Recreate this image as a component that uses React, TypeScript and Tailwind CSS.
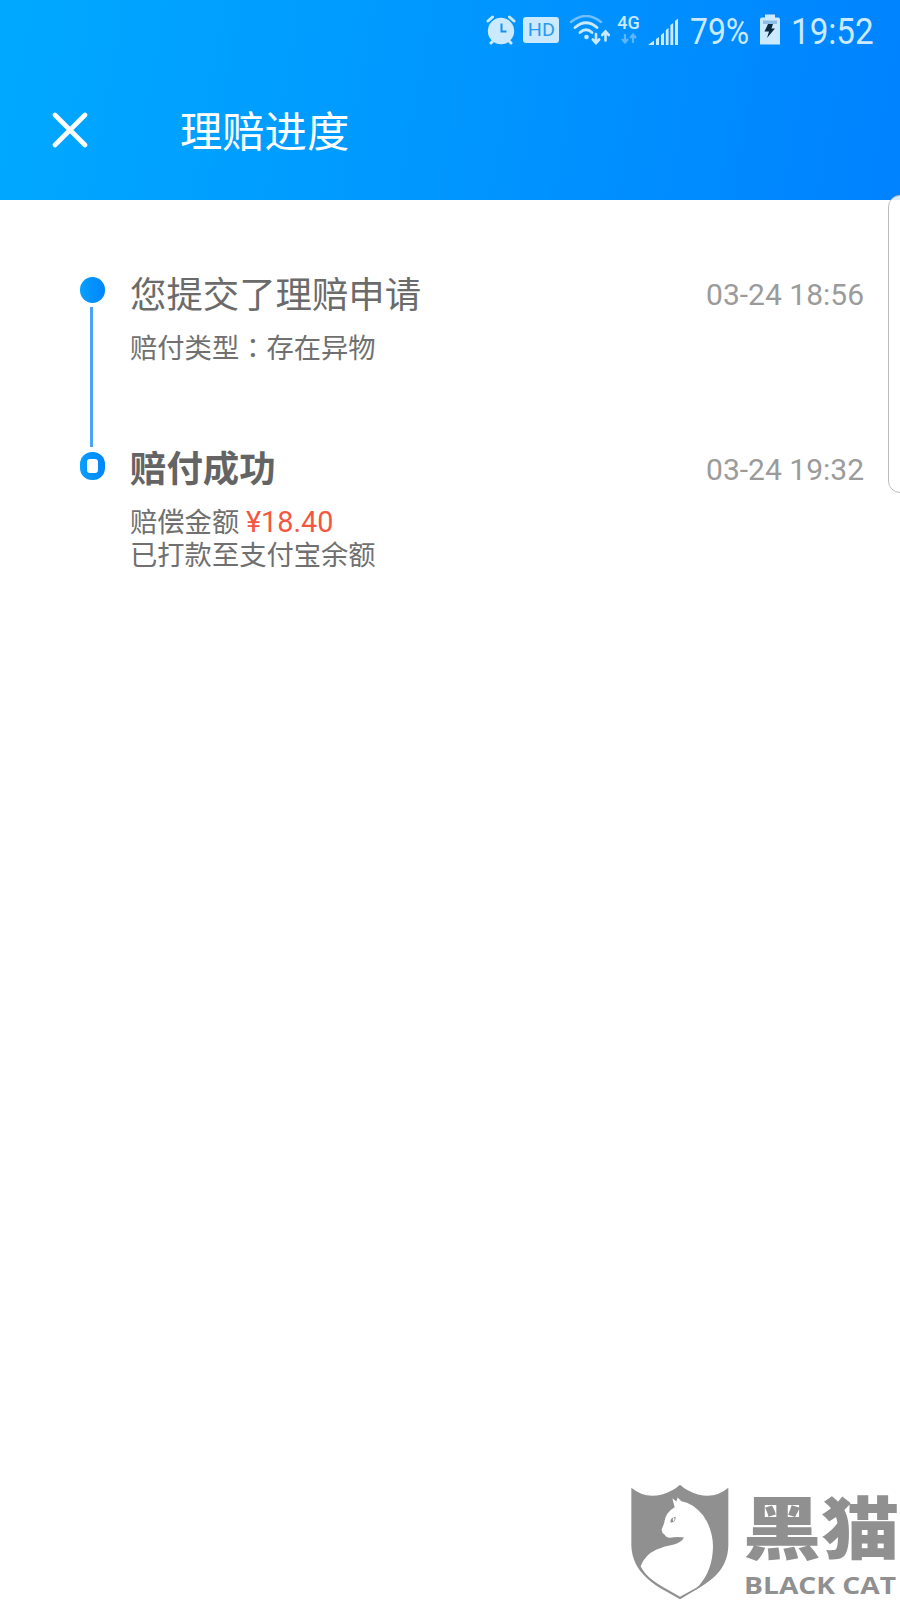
import type { ReactNode } from "react";

function AlarmIcon() {
  return (
    <svg width="30" height="31" viewBox="0 0 30 31" fill="none">
      <circle cx="15" cy="16" r="13.2" fill="#cbe9ff" />
      <path d="M2 6 L6.5 2 M28 6 L23.5 2" stroke="#cbe9ff" strokeWidth="3" strokeLinecap="round" />
      <path d="M5 28 L8 25 M25 28 L22 25" stroke="#cbe9ff" strokeWidth="3" strokeLinecap="round" />
      <path d="M15.5 8.5 V16.5 H20.5" stroke="#1593f5" strokeWidth="2" />
    </svg>
  );
}

function WifiIcon() {
  return (
    <svg width="42" height="31" viewBox="0 0 42 31" fill="none" strokeLinecap="round">
      <path d="M2 7 Q17 -5 32 7" stroke="#6fc0ff" strokeWidth="2.4" />
      <path d="M6 12.5 Q17 3 28 12.5" stroke="#cbe9ff" strokeWidth="2.8" />
      <path d="M11 17.5 Q17 12 23 17.5" stroke="#cbe9ff" strokeWidth="2.8" />
      <circle cx="17.5" cy="22" r="2.3" fill="#cbe9ff" />
      <path d="M27 19 V27 M23.8 24.5 L27 28 L30.2 24.5" stroke="#cbe9ff" strokeWidth="2.6" />
      <path d="M36.5 25.5 V17.5 M33.2 20 L36.5 16.5 L39.8 20" stroke="#cbe9ff" strokeWidth="2.6" />
    </svg>
  );
}

function SignalIcon() {
  return (
    <svg width="31" height="28" viewBox="0 0 31 28" fill="#cbe9ff">
      <path d="M0 27 L6 22.5 V27 Z" />
      <path d="M8 21 L11 19 V27 H8 Z" />
      <path d="M13 17 L16 14.5 V27 H13 Z" />
      <path d="M17.8 12 L20.6 10 V27 H17.8 Z" />
      <path d="M22.4 7 L25.2 5 V27 H22.4 Z" />
      <path d="M27 3 L30 0.5 V27 H27 Z" />
    </svg>
  );
}

function BatteryIcon() {
  return (
    <svg width="20" height="31" viewBox="0 0 20 31">
      <path d="M5 0.5 H15 V3.5 H18 Q20 3.5 20 5.5 V30.5 H0 V5.5 Q0 3.5 2 3.5 H5 Z" fill="#cbe9ff" />
      <rect x="3" y="6.5" width="14" height="3.5" fill="#8bbfe8" />
      <path d="M8 10 H13 L11.5 14.5 H15 L7 24 L9 17.5 H4.5 Z" fill="#0b2a42" />
    </svg>
  );
}

function StatusBar() {
  return (
    <div className="flex h-[60px] items-center pl-[486px] text-[#cbe9ff]">
      <AlarmIcon />
      <div className="mb-px ml-[7px] flex h-[26px] w-9 items-center justify-center rounded-[3px] bg-[#cbe9ff] text-[18px] leading-none text-[#2b9bf0]">
        <span className="scale-x-110">HD</span>
      </div>
      <div className="ml-[10px]">
        <WifiIcon />
      </div>
      <div className="ml-[5px] flex h-[34px] w-[25px] flex-col items-center">
        <span className="text-[18px] font-medium leading-[20px]">4G</span>
        <svg width="16" height="11" viewBox="0 0 16 11" fill="none" stroke="#5db5fb" strokeWidth="2.2">
          <path d="M4 1 V9 M1 6 L4 9.5 L7 6" />
          <path d="M12 10 V2 M9 5 L12 1.5 L15 5" />
        </svg>
      </div>
      <div className="ml-[7px] mt-[3px]">
        <SignalIcon />
      </div>
      <div className="ml-[11px] w-[61px] text-[37.5px] leading-[60px]">
        <div className="mt-px origin-left scale-x-[0.85] whitespace-nowrap">79%</div>
      </div>
      <div className="-mt-px ml-[9px]">
        <BatteryIcon />
      </div>
      <div className="ml-[11px] w-[84px] text-[37.5px] leading-[60px]">
        <div className="mt-px origin-left scale-x-[0.885] whitespace-nowrap">19:52</div>
      </div>
    </div>
  );
}

function Header() {
  return (
    <header className="h-[200px] bg-[linear-gradient(100deg,#00a9ff_0%,#0097ff_50%,#0082ff_100%)]">
      <StatusBar />
      <div className="flex h-[140px] items-center pl-[52px]">
        <svg width="36" height="36" viewBox="0 0 36 36" stroke="white" strokeWidth="4.6" strokeLinecap="round">
          <path d="M3 3 L33 33 M33 3 L3 33" />
        </svg>
        <h1 className="ml-[92px] mt-[6px] text-[42.3px] leading-[60px] text-white">理赔进度</h1>
      </div>
    </header>
  );
}

type StepProps = {
  title: string;
  time: string;
  current?: boolean;
  children: ReactNode;
};

function Step({ title, time, current, children }: StepProps) {
  return (
    <li className="flex h-[175px]">
      <div className="flex w-[25px] flex-col items-center">
        {current ? (
          <div className="flex h-7 w-[25px] shrink-0 items-center justify-center rounded-[12px] bg-linear-to-r from-[#0a9fff] to-[#0085ff]">
            <div className="h-[14px] w-[11px] rounded-[3px] bg-white" />
          </div>
        ) : (
          <>
            <div className="h-[26px] w-[25px] shrink-0 rounded-full bg-linear-to-r from-[#0a9fff] to-[#0085ff]" />
            <div className="mr-[2px] mt-1 h-[140px] w-[3px] bg-[#4aa3f3]" />
          </>
        )}
      </div>
      <div className="ml-[25px] flex-1">
        <div className="flex h-9 items-center justify-between">
          <h2 className={current ? "mt-px text-[36.4px] font-bold text-[#646464]" : "mt-[2px] text-[36.4px] text-[#6b6b6b]"}>
            {title}
          </h2>
          <time className="mb-px text-[30px] text-[#9b9b9b]">{time}</time>
        </div>
        <div className={current ? "mt-[19px] text-[27.3px] leading-[33px] text-[#707070]" : "mt-[17px] text-[27.3px] leading-[33px] text-[#707070]"}>
          {children}
        </div>
      </div>
    </li>
  );
}

// Shield with the sitting cat, plus the brand name
function BlackCatMark() {
  return (
    <div className="absolute bottom-0 right-0 flex h-[120px] w-[270px] text-[#919091]">
      <svg width="100" height="117" viewBox="30 40 300 350" className="mt-[3px] shrink-0">
        <path
          d="M34 54 Q75 88 126 74 Q160 64 180 45 Q200 64 234 74 Q285 88 325 54 V226 Q324 286 278 325 Q258 342 218 366 L180 388 L143 367 Q105 348 82 326 Q36 286 34 228 Z"
          fill="currentColor"
        />
        <path
          d="M157 85 L169 95 L173 83 L184 94 Q218 99 249 136 Q278 177 279 230 Q278 300 238 346 Q228 356 214 362 L180 381 L146 361 Q112 344 89 324 Q70 306 62 289 Q74 255 110 239 Q135 229 159 225 Q185 218 192 203 Q169 200 150 204 Q139 204 134 195 Q124 189 125 178 Q130 168 133 157 Q137 127 164 112 Z"
          fill="white"
        />
        <path d="M151 154 Q154 142 167 141 Q168 157 153 159 Z" fill="currentColor" />
        <ellipse cx="161" cy="148" rx="2.5" ry="6" fill="white" />
      </svg>
      <div className="ml-[13px] w-[157px] pt-[17px]">
        <div className="h-[70px] origin-top-left scale-x-[0.99] scale-y-[0.87] whitespace-nowrap text-[79px] font-black leading-[79px]">
          黑猫
        </div>
        <div className="ml-px mt-[4px] origin-left scale-x-[1.2] whitespace-nowrap font-['Open_Sans'] text-[23.5px] font-bold leading-[28px]">
          BLACK CAT
        </div>
      </div>
    </div>
  );
}

export default function App() {
  return (
    <div className="relative h-[1600px] w-[900px] overflow-hidden bg-white font-[Roboto,'Noto_Sans_CJK_SC',sans-serif]">
      <Header />
      <ol className="pl-20 pr-[36px] pt-[77px]">
        <Step title="您提交了理赔申请" time="03-24 18:56">
          赔付类型
          <span lang="zh-TW" className="font-['Noto_Sans_CJK_TC']">：</span>
          存在异物
        </Step>
        <Step title="赔付成功" time="03-24 19:32" current>
          <p>
            赔偿金额 <span className="text-[28.8px]/[30px] text-[#f4573f]">¥18.40</span>
          </p>
          <p>已打款至支付宝余额</p>
        </Step>
      </ol>
      {/* edge panel handle */}
      <div className="absolute -right-3 top-[195px] h-[298px] w-6 rounded-[12px] border border-[#bdbdbd] bg-white/85" />
      <BlackCatMark />
    </div>
  );
}
